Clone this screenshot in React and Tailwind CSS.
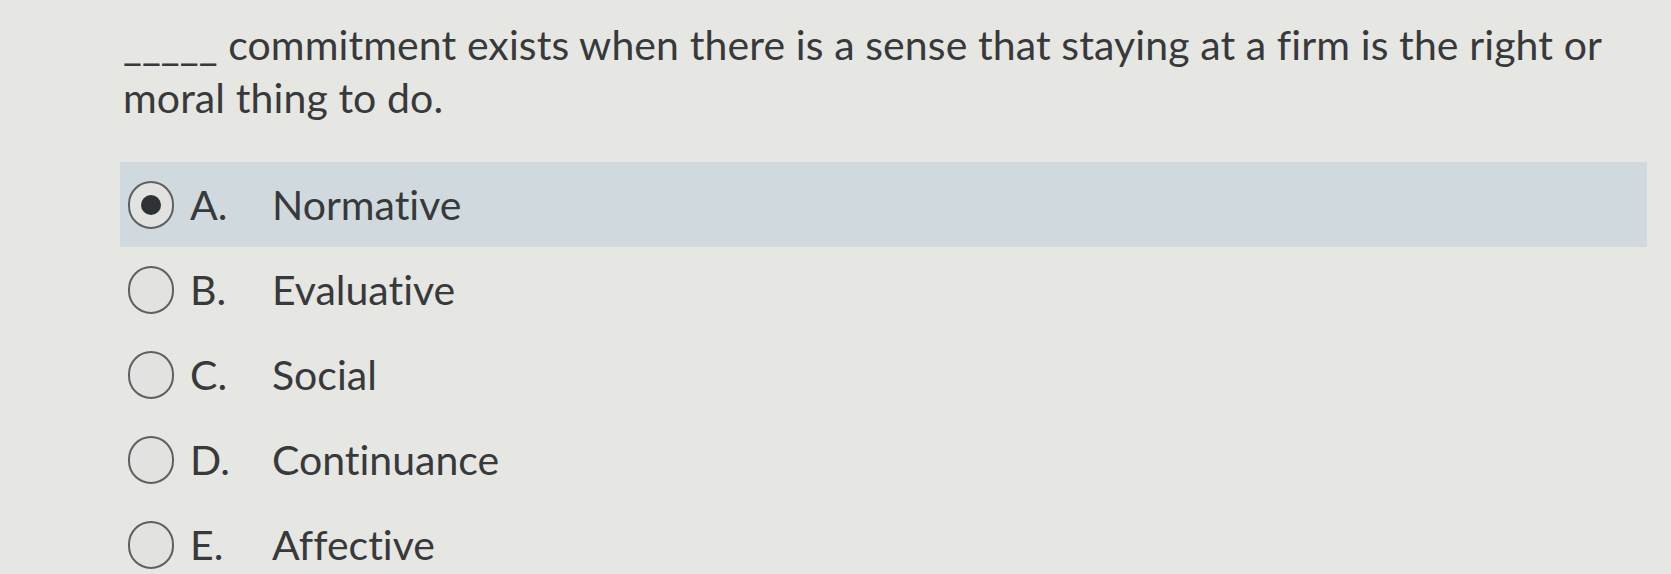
import React from "react";

const options = [
  { letter: "A.", label: "Normative", selected: true },
  { letter: "B.", label: "Evaluative" },
  { letter: "C.", label: "Social" },
  { letter: "D.", label: "Continuance" },
  { letter: "E.", label: "Affective" },
];

function Radio({ selected }) {
  return (
    <span className="flex h-[48px] w-[46px] shrink-0 items-center justify-center rounded-full border-2 border-[#5d6062] bg-[#e2e3e1]">
      {selected && <span className="h-[20px] w-[20px] rounded-full bg-[#2f3234]" />}
    </span>
  );
}

export default function App() {
  return (
    <main
      className="h-[574px] w-[1671px] overflow-hidden bg-[#e6e6e3] text-[#37393b] [font-variant-ligatures:none]"
      style={{ fontFamily: "Lato, 'Open Sans', sans-serif" }}
    >
      <div className="w-[1650px] pl-[123px] pt-[18px]">
        <p className="text-[41px] leading-[53px] tracking-[0.1px]">
          _____ commitment exists when there is a sense that staying at a firm is the right or moral thing to do.
        </p>
      </div>
      <ul className="mt-[38px] ml-[120px] w-[1527px]">
        {options.map((o) => (
          <li
            key={o.letter}
            className={
              "flex h-[85px] items-center " + (o.selected ? "bg-[#d0d9dd]" : "")
            }
          >
            <span className="ml-[8px]">
              <Radio selected={o.selected} />
            </span>
            <span className="ml-[16px] w-[82px] text-[41px]">{o.letter}</span>
            <span className="text-[41px]">{o.label}</span>
          </li>
        ))}
      </ul>
    </main>
  );
}
